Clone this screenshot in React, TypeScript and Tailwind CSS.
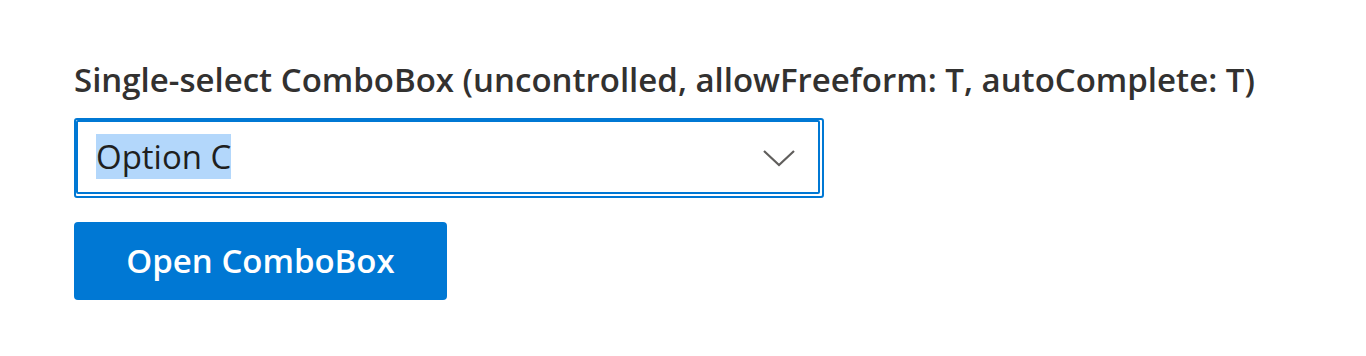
import React from "react";

export default function App() {
  return (
    <div
      className="w-[1366px] h-[356px] bg-white px-[74px] pt-[50px] text-[#323130]"
      style={{ fontFamily: '"Open Sans", "Noto Sans", sans-serif' }}
    >
      <div className="pt-[10px] pb-[18px] text-[33px] leading-[40px] font-semibold whitespace-nowrap">
        Single-select ComboBox (uncontrolled, allowFreeform: T, autoComplete: T)
      </div>
      <div className="w-[750px] h-[80px] border-2 border-[#0078d4] rounded-[3px] flex">
        <div className="flex-1 mr-[2px] mb-[2px] border-2 border-[#0078d4] rounded-[2px] flex items-center pl-[18px] pr-[22px]">
          <div className="flex-1 flex items-center pb-[2px]">
            <span className="bg-[#b3d7fb] text-[33px] leading-[45px] text-[#201f1e]">Option C</span>
          </div>
          <svg width="34" height="24" viewBox="0 0 34 24" className="shrink-0">
            <path d="M2 6 L17 20 L32 6" fill="none" stroke="#605e5c" strokeWidth="2.2" />
          </svg>
        </div>
      </div>
      <button className="mt-[24px] w-[373px] h-[78px] rounded-[4px] bg-[#0078d4] text-white text-[33px] font-semibold flex items-center justify-center">
        Open ComboBox
      </button>
    </div>
  );
}
